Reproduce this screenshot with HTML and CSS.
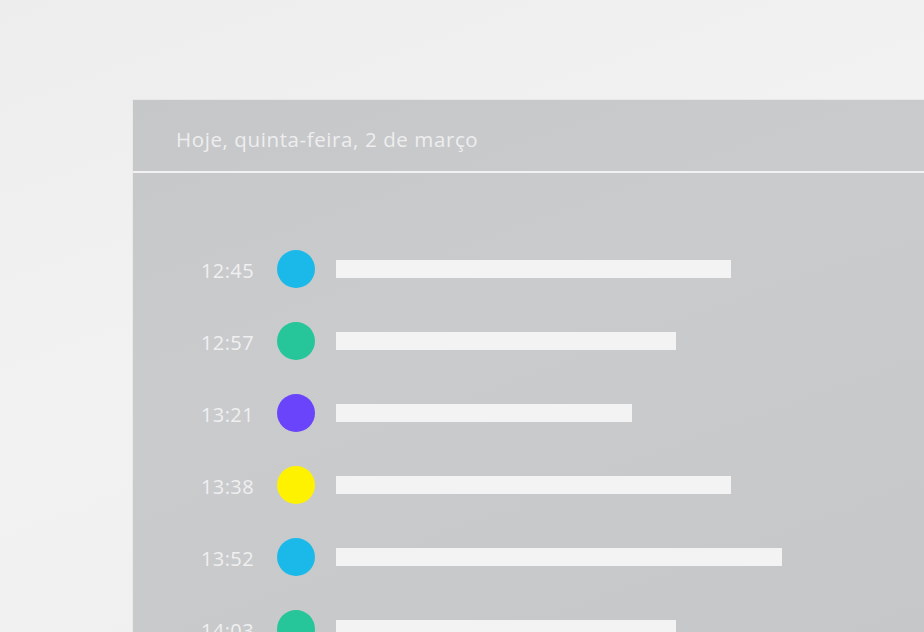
FILE: index.html
```html
<!DOCTYPE html>
<html lang="pt">
<head>
<meta charset="utf-8">
<title>Agenda</title>
<link rel="stylesheet" href="styles.css">
</head>
<body>
<main class="stage">
  <section class="agenda">
    <header class="agenda-head">Hoje, quinta-feira, 2 de março</header>
    <ul class="agenda-list">
      <li class="slot"><span class="time">12:45</span><span class="dot dot-blue"></span><span class="bar" style="width:395px"></span></li>
      <li class="slot"><span class="time">12:57</span><span class="dot dot-green"></span><span class="bar" style="width:340px"></span></li>
      <li class="slot"><span class="time">13:21</span><span class="dot dot-purple"></span><span class="bar" style="width:296px"></span></li>
      <li class="slot"><span class="time">13:38</span><span class="dot dot-yellow"></span><span class="bar" style="width:395px"></span></li>
      <li class="slot"><span class="time">13:52</span><span class="dot dot-blue"></span><span class="bar" style="width:446px"></span></li>
      <li class="slot"><span class="time">14:03</span><span class="dot dot-green"></span><span class="bar" style="width:340px"></span></li>
    </ul>
  </section>
</main>
</body>
</html>
```
FILE: styles.css
```css
html, body {
  margin: 0;
  height: 100%;
  overflow: hidden;
}

body {
  background: linear-gradient(160deg, #ededed 0%, #f2f2f2 45%, #eeeeee 100%);
  font-family: "Open Sans", "Noto Sans", sans-serif;
}

.stage {
  padding: 99px 0 0 132px;
  height: 100%;
  box-sizing: border-box;
}

.agenda {
  height: 100%;
  background: linear-gradient(160deg, #c6c7c9 0%, #cacbcd 40%, #c6c7c9 100%);
  border-top: 1px solid #e9e9ea;
  border-left: 1px solid #e9e9ea;
}

.agenda-head {
  height: 73px;
  box-sizing: border-box;
  padding: 7px 0 0 43px;
  display: flex;
  align-items: center;
  color: #eeeeef;
  font-size: 20.5px;
  letter-spacing: 0.6px;
  border-bottom: 2px solid #f2f2f3;
}

.agenda-list {
  list-style: none;
  margin: 0;
  padding: 60px 0 0 68px;
}

.slot {
  height: 72px;
  display: flex;
  align-items: center;
}

.time {
  width: 76px;
  color: #f0f0f1;
  font-size: 20px;
  letter-spacing: 0.4px;
  padding-top: 2px;
}

.dot {
  width: 38px;
  height: 38px;
  border-radius: 50%;
  margin-right: 21px;
  flex: none;
}

.dot-blue { background: #1bb9ea; }
.dot-green { background: #26c69a; }
.dot-purple { background: #6a44fa; }
.dot-yellow { background: #fff200; }

.bar {
  height: 18px;
  background: #f3f3f3;
}
```
